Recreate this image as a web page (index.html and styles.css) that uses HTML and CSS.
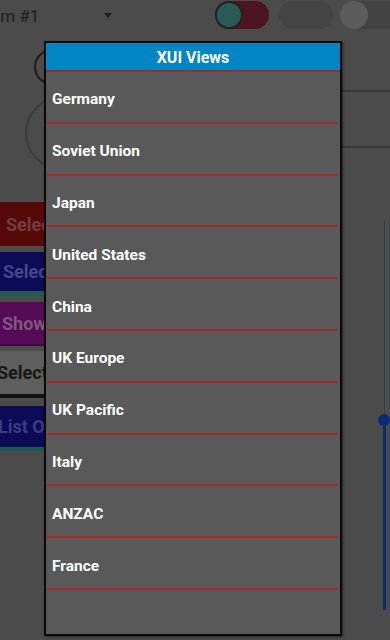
FILE: index.html
```html
<!DOCTYPE html>
<html>
<head>
<meta charset="utf-8">
<link rel="stylesheet" href="styles.css">
</head>
<body>
<div class="app">
  <div class="topbar">
    <div class="spinner"><span class="spin-text">Item #1</span><span class="spin-arrow"></span></div>
    <div class="switches">
      <div class="sw sw-on"><span class="thumb"></span></div>
      <div class="sw sw-off"></div>
      <div class="sw sw-light"><span class="thumb"></span></div>
    </div>
  </div>
  <div class="middle">
    <div class="circles">
      <span class="circle c1"></span>
      <span class="circle c2"></span>
    </div>
    <div class="lines">
      <span class="hline l1"></span>
      <span class="hline l2"></span>
    </div>
  </div>
  <div class="content">
    <div class="buttons">
      <div class="btn b-red"><span>Select</span></div>
      <div class="btn b-blue"><span>Select</span></div>
      <div class="btn b-purple"><span>Show</span></div>
      <div class="btn b-gray"><span>Select</span></div>
      <div class="btn b-blue2"><span>List Of</span></div>
    </div>
    <div class="slider">
      <div class="track-top"></div>
      <div class="knob"></div>
      <div class="track-bottom"></div>
    </div>
  </div>

  <div class="dialog">
    <div class="dlg-title">XUI Views</div>
    <ul class="dlg-list">
      <li>Germany</li>
      <li>Soviet Union</li>
      <li>Japan</li>
      <li>United States</li>
      <li>China</li>
      <li>UK Europe</li>
      <li>UK Pacific</li>
      <li>Italy</li>
      <li>ANZAC</li>
      <li>France</li>
    </ul>
  </div>
</div>
</body>
</html>
```
FILE: styles.css
```css
* { box-sizing: border-box; }
html, body { margin: 0; padding: 0; }
body {
  width: 390px;
  height: 640px;
  overflow: hidden;
  font-family: Roboto, "Liberation Sans", sans-serif;
  background: #4b4b4b;
}
.app {
  position: relative;
  width: 390px;
  height: 640px;
  background: #4b4b4b;
  overflow: hidden;
}
.topbar {
  height: 32px;
  display: flex;
  align-items: flex-start;
}
.spinner {
  height: 32px;
  display: flex;
  align-items: center;
  margin-left: -19px;
}
.spin-text {
  font-size: 17px;
  color: #1e1e1e;
  width: 123px;
  white-space: nowrap;
}
.spin-arrow {
  width: 0; height: 0;
  border-left: 4px solid transparent;
  border-right: 4px solid transparent;
  border-top: 5px solid #1e1e1e;
  margin-top: -2px;
}
.switches {
  margin-left: 103px;
  display: flex;
  gap: 10px;
  padding-top: 1px;
}
.sw {
  position: relative;
  height: 28px;
  border-radius: 14px;
}
.sw-on {
  width: 54px;
  background: #4c1424;
}
.sw-on .thumb {
  position: absolute;
  left: 0; top: 0;
  width: 28px; height: 28px;
  border-radius: 50%;
  background: #2a5a55;
  border: 2px solid #222;
}
.sw-off {
  width: 54px;
  background: #444;
}
.sw-light {
  width: 60px;
  margin-left: -3px;
  background: #434343;
}
.sw-light .thumb {
  position: absolute;
  left: 0; top: 0;
  width: 28px; height: 28px;
  border-radius: 50%;
  background: #5c5c5c;
}
.middle {
  height: 168px;
  display: flex;
  justify-content: space-between;
}
.circles {
  position: relative;
  width: 120px;
}
.circle {
  position: absolute;
  border-radius: 50%;
}
.c1 {
  left: 34px; top: 17px;
  width: 36px; height: 36px;
  border: 2px solid #1c1c1c;
}
.c2 {
  left: 25px; top: 64px;
  width: 74px; height: 74px;
  border: 2px solid #3c3c3c;
}
.lines {
  width: 50px;
  display: flex;
  flex-direction: column;
  padding-top: 58px;
}
.hline {
  display: block;
  height: 2px;
  background: #383838;
}
.l2 { margin-top: 54px; }
.content {
  display: flex;
  justify-content: space-between;
}
.buttons {
  width: 46px;
  padding-top: 2px;
  display: flex;
  flex-direction: column;
}
.btn {
  width: 46px;
  overflow: hidden;
  white-space: nowrap;
  font-size: 18px;
  font-weight: 700;
  display: flex;
  align-items: center;
}
.b-red {
  height: 44px;
  background: #560909;
  color: #743c3c;
  padding-left: 6px;
}
.b-blue {
  margin-top: 6px;
  height: 44px;
  background: #0b0b56;
  color: #46468a;
  padding-left: 3px;
  border-bottom: 5px solid #1f5b55;
}
.b-purple {
  margin-top: 6px;
  height: 44px;
  background: #560b56;
  color: #805680;
  padding-left: 2px;
  border-bottom: 2px solid #3c073c;
}
.b-gray {
  margin-top: 5px;
  height: 47px;
  background: #5e5e5e;
  color: #161616;
  padding-left: 0;
  text-indent: -3px;
  border-bottom: 4px solid #111;
}
.b-blue2 {
  margin-top: 8px;
  height: 45px;
  background: #0b0b56;
  color: #3c3c86;
  text-indent: -2px;
  border-bottom: 4px solid #1f5b55;
}
.slider {
  width: 12px;
  padding-top: 22px;
  display: flex;
  flex-direction: column;
  align-items: center;
}
.track-top {
  width: 1px;
  height: 194px;
  background: #323b52;
}
.knob {
  width: 12px;
  height: 12px;
  border-radius: 50%;
  background: #0a2c70;
  margin-top: -2px;
}
.track-bottom {
  width: 3px;
  height: 186px;
  margin-top: -2px;
  background: #0a2c70;
}
.dialog {
  position: absolute;
  left: 44px;
  top: 41px;
  width: 298px;
  height: 595px;
  background: #595959;
  border: 2px solid #0a0a0a;
  box-shadow: 1px 1px 2px rgba(0,0,0,0.5);
}
.dlg-title {
  height: 29px;
  background: #0185c3;
  color: #fff;
  font-weight: 700;
  font-size: 16px;
  text-align: center;
  line-height: 30px;
  border-bottom: 2px solid #a42a2a;
  margin: 0;
}
.dlg-list {
  list-style: none;
  margin: 0;
  padding: 0;
}
.dlg-list li {
  height: 51.8px;
  display: flex;
  align-items: center;
  padding-left: 5px;
  padding-top: 5px;
  color: #fff;
  font-weight: 700;
  font-size: 15.5px;
  margin: 0 3px 0 1px;
  border-bottom: 2px solid #a42a2a;
}
```
